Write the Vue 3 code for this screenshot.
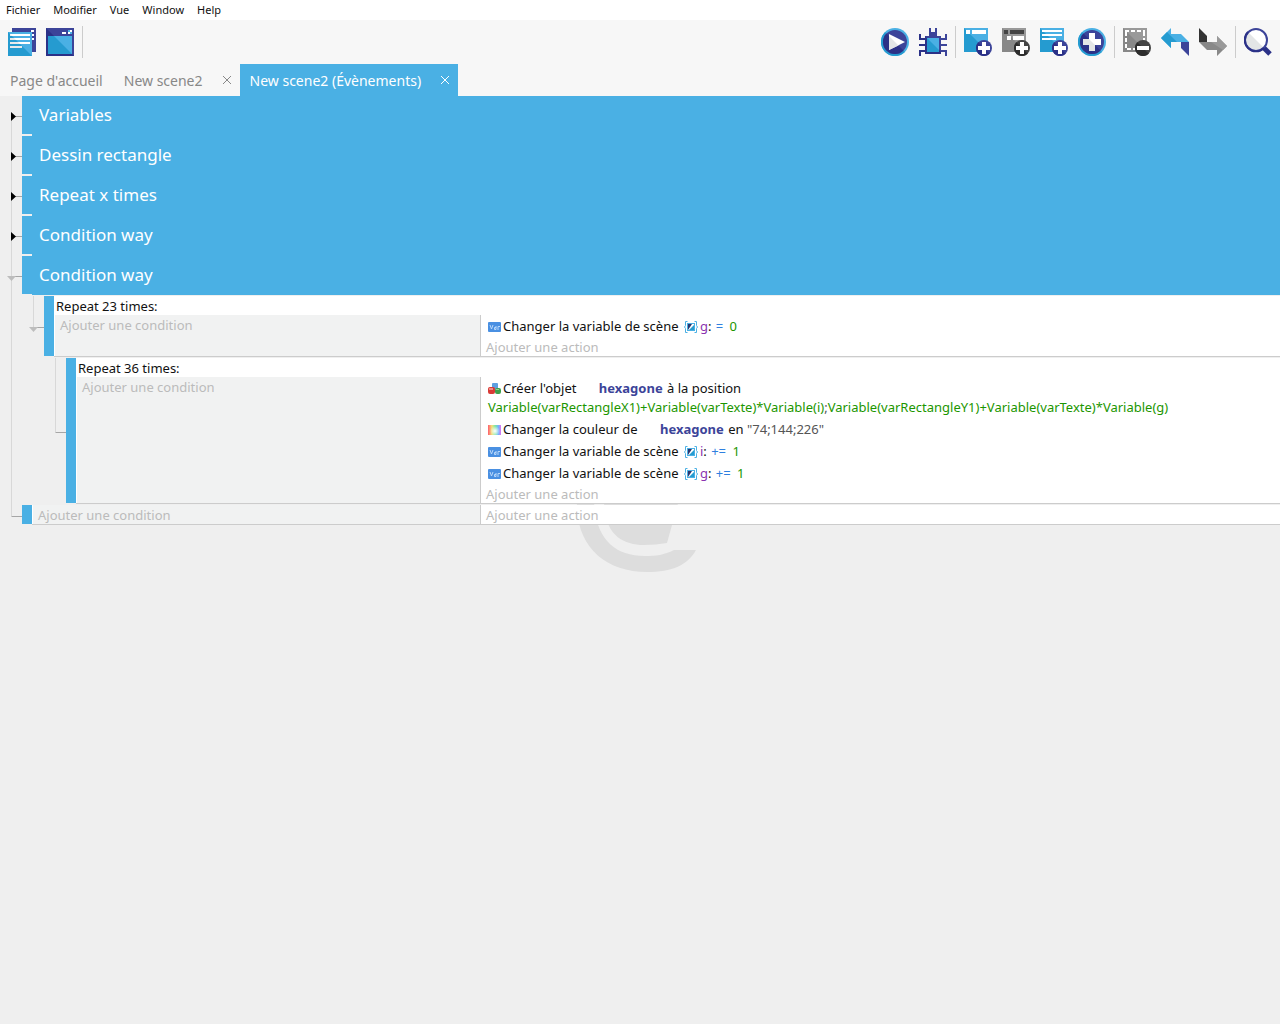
<script setup>
import { ref } from 'vue';

const menu = ['Fichier', 'Modifier', 'Vue', 'Window', 'Help'];

const tabs = ref([
    { name: "Page d'accueil", closable: false },
    { name: 'New scene2', closable: true },
    { name: 'New scene2 (Évènements)', closable: true },
]);
const activeTab = ref(2);

const closeTab = (index) => {
    tabs.value.splice(index, 1);
    activeTab.value = Math.min(activeTab.value, tabs.value.length - 1);
};

const setVariable = (name, sign, value) => ({
    icon: 'var',
    parts: [
        { text: 'Changer la variable de scène ' },
        { type: 'sceneIcon' },
        { type: 'variable', text: name },
        { text: ': ' },
        { type: 'operator', text: sign },
        { text: ' ' },
        { type: 'number', text: value },
    ],
});

// depth - уровень вложенности, last - последнее событие на своём уровне
const events = ref([
    { type: 'group', title: 'Variables', depth: 0, arrow: 'closed' },
    { type: 'group', title: 'Dessin rectangle', depth: 0, arrow: 'closed' },
    { type: 'group', title: 'Repeat x times', depth: 0, arrow: 'closed' },
    { type: 'group', title: 'Condition way', depth: 0, arrow: 'closed' },
    { type: 'group', title: 'Condition way', depth: 0, arrow: 'open' },
    {
        type: 'repeat', title: 'Repeat 23 times:', depth: 1, arrow: 'open', last: true, lines: [true],
        actions: [setVariable('g', '=', '0')],
    },
    {
        type: 'repeat', title: 'Repeat 36 times:', depth: 2, last: true, lines: [true, false],
        actions: [
            {
                icon: 'create',
                parts: [
                    { text: "Créer l'objet " },
                    { type: 'object', text: 'hexagone' },
                    { text: ' à la position ' },
                    { type: 'number', text: 'Variable(varRectangleX1)+Variable(varTexte)*Variable(i)' },
                    { type: 'comma', text: ';' },
                    { type: 'number', text: 'Variable(varRectangleY1)+Variable(varTexte)*Variable(g)' },
                ],
            },
            {
                icon: 'color',
                parts: [
                    { text: 'Changer la couleur de ' },
                    { type: 'object', text: 'hexagone' },
                    { text: ' en ' },
                    { type: 'string', text: '"74;144;226"' },
                ],
            },
            setVariable('i', '+=', '1'),
            setVariable('g', '+=', '1'),
        ],
    },
    { type: 'standard', depth: 0, last: true, actions: [] },
]);
</script>


<template>
    <div class="app">
        <nav class="menu">
            <button v-for="item in menu" :key="item" class="menu__item">{{ item }}</button>
        </nav>

        <div class="toolbar">
            <button class="tool" aria-label="Gestionnaire de projet">
                <svg viewBox="0 0 28 28">
                    <path fill="#3c4499" d="M4 0h24v24H4z" />
                    <path fill="#fff" d="M23 2h3v2h-3zM23 6h3v2h-3zM23 10h3v2h-3z" />
                    <path fill="#259bd0" d="M0 4h24v24H0z" />
                    <path fill="#4ab0e4" d="M0 4h24v24z" />
                    <path fill="#e8eaeb" d="M2 6h20v2H2zM2 10h20v2H2zM2 14h20v2H2zM2 18h12v2H2z" />
                    <path fill="#fff" d="M2 6h20v2H4zM6 10h16v2H8zM10 14h12v2H12z" />
                </svg>
            </button>
            <button class="tool" aria-label="Aperçu">
                <svg viewBox="0 0 28 28">
                    <path fill="#2b3187" d="M0 0h28v28H0z" />
                    <path fill="#3c4499" d="M0 0h28v28z" />
                    <path fill="#259bd0" d="M2 8h24v18H2z" />
                    <path fill="#4ab0e4" d="M8 8h18v18z" />
                    <path fill="#fff" d="M16 4h4v2h-4zM22 2h4v4h-4z" />
                    <path fill="#4ab0e4" d="M22 2h2v2h-2zM24 4h2v2h-2z" />
                </svg>
            </button>
            <span class="separator"></span>
            <span class="spacer"></span>

            <button class="tool" aria-label="Lancer">
                <svg viewBox="0 0 28 28">
                    <circle cx="14" cy="14" r="14" fill="#4ab0e4" />
                    <path fill="#259bd0" d="M4 4a14 14 0 0 0 20 20z" />
                    <circle cx="14" cy="14" r="12" fill="#3c4499" />
                    <path fill="#2b3187" d="M5.500 5.500a12 12 0 0 0 17 17z" />
                    <path fill="#fff" d="M8 6l16 8-16 8z" />
                    <path fill="#e3e5e6" d="M8 8l9.500 9.500L8 22z" />
                </svg>
            </button>
            <button class="tool" aria-label="Débogueur">
                <svg viewBox="0 0 28 28">
                    <path fill="#3c4499" d="M10 0h2v4h4V0h2v8h4v18H6V8h4z" />
                    <path fill="#3c4499" d="M28 6v6h-6v-2h4V6zM28 16v2h-6v-2zM28 28h-2v-4h-4v-2h6z" />
                    <path fill="#2b3187" d="M0 6v6h6v-2H2V6zM0 16v2h6v-2zM0 28h2v-4h4v-2H0zM6 8l16 16v2H6z" />
                    <path fill="#259bd0" d="M8 10h12v14H8z" />
                    <path fill="#4ab0e4" d="M8 10h12v12z" />
                </svg>
            </button>
            <span class="separator"></span>

            <button class="tool" aria-label="Ajouter un évènement">
                <svg viewBox="0 0 28 28">
                    <path fill="#259bd0" d="M0 0h24v24H0z" />
                    <path fill="#4ab0e4" d="M0 0h24v24z" />
                    <path fill="#fff" d="M2 2h4v4H2zM8 2h14v4H8z" />
                    <circle cx="20" cy="20" r="8" fill="#3c4499" />
                    <path fill="#2b3187" d="M14.300 14.300a8 8 0 0 0 11.400 11.400z" />
                    <path fill="#fff" d="M18 14h4v4h4v4h-4v4h-4v-4h-4v-4h4z" />
                </svg>
            </button>
            <button class="tool" aria-label="Ajouter un sous-évènement">
                <svg viewBox="0 0 28 28">
                    <path fill="#888" d="M0 0h24v24H0z" />
                    <path fill="#999" d="M0 0h24v24z" />
                    <path fill="#444" d="M2 2h4v4H2zM8 2h14v4H8z" />
                    <path fill="#fff" d="M5 8h4v4H5zM11 8h11v4H11z" />
                    <circle cx="20" cy="20" r="8" fill="#444" />
                    <path fill="#2d2d2d" d="M14.300 14.300a8 8 0 0 0 11.400 11.400z" />
                    <path fill="#fff" d="M18 14h4v4h4v4h-4v4h-4v-4h-4v-4h4z" />
                </svg>
            </button>
            <button class="tool" aria-label="Ajouter un commentaire">
                <svg viewBox="0 0 28 28">
                    <path fill="#259bd0" d="M0 0h24v24H0z" />
                    <path fill="#4ab0e4" d="M0 0h24v24z" />
                    <path fill="#fff" d="M2 2h20v2H2zM2 6h20v2H2zM2 10h14v2H2z" />
                    <circle cx="20" cy="20" r="8" fill="#3c4499" />
                    <path fill="#2b3187" d="M14.300 14.300a8 8 0 0 0 11.400 11.400z" />
                    <path fill="#fff" d="M18 14h4v4h4v4h-4v4h-4v-4h-4v-4h4z" />
                </svg>
            </button>
            <button class="tool" aria-label="Ajouter">
                <svg viewBox="0 0 28 28">
                    <circle cx="14" cy="14" r="14" fill="#4ab0e4" />
                    <path fill="#259bd0" d="M4 4a14 14 0 0 0 20 20z" />
                    <circle cx="14" cy="14" r="12" fill="#3c4499" />
                    <path fill="#2b3187" d="M5.500 5.500a12 12 0 0 0 17 17z" />
                    <path fill="#fff" d="M11 5h6v6h6v6h-6v6h-6v-6H5v-6h6z" />
                    <path fill="#e3e5e6" d="M5 11h6l6 6v6h-6v-6H5z" />
                </svg>
            </button>
            <span class="separator"></span>

            <button class="tool" aria-label="Supprimer">
                <svg viewBox="0 0 28 28">
                    <path fill="#888" d="M0 0h24v24H0z" />
                    <path fill="#999" d="M0 0h24v24z" />
                    <path fill="none" stroke="#fff" stroke-width="2" stroke-dasharray="4 2" d="M2 3h20M21 4v8M3 4v18M4 21h8" />
                    <circle cx="20" cy="20" r="8" fill="#444" />
                    <path fill="#2d2d2d" d="M14.300 14.300a8 8 0 0 0 11.400 11.400z" />
                    <path fill="#fff" d="M14 18h12v4H14z" />
                </svg>
            </button>
            <button class="tool" aria-label="Annuler">
                <svg viewBox="0 0 28 28">
                    <path fill="#4ab0e4" d="M0 10L10 0v6h10l8 8H10v6z" />
                    <path fill="#259bd0" d="M0 10l6-6 10 10h-6v6z" />
                    <path fill="#3c4499" d="M20 14h8v14l-8-8z" />
                </svg>
            </button>
            <button class="tool" aria-label="Refaire">
                <svg viewBox="0 0 28 28">
                    <path fill="#888" d="M28 18L18 28v-6H8l-8-8h18V8z" />
                    <path fill="#999" d="M28 18L18 8v6h-6l12 8z" />
                    <path fill="#333" d="M0 0l8 8v6H0z" />
                </svg>
            </button>
            <span class="separator"></span>

            <button class="tool" aria-label="Rechercher">
                <svg viewBox="0 0 28 28">
                    <path stroke="#2b3187" stroke-width="5" d="M18 18l8 8" />
                    <circle cx="12" cy="12" r="11" fill="#fff" />
                    <path fill="#e3e5e6" d="M4 4a11 11 0 0 0 16 16z" />
                    <circle cx="12" cy="12" r="11" fill="none" stroke="#3c4499" stroke-width="2" />
                    <path fill="none" stroke="#2b3187" stroke-width="2" d="M4 4a11 11 0 0 0 16 16" />
                </svg>
            </button>
        </div>

        <div class="tabs">
            <div v-for="(tab, index) in tabs" :key="tab.name" class="tab" :class="{ active: index === activeTab }">
                <button class="tab__name" @click="activeTab = index">{{ tab.name }}</button>
                <button v-if="tab.closable" class="tab__close" aria-label="Fermer" @click="closeTab(index)">
                    <svg viewBox="0 0 10 10"><path d="M1 1l8 8M9 1L1 9" /></svg>
                </button>
            </div>
        </div>

        <main class="sheet">
            <!-- Логотип на фоне -->
            <svg class="watermark" viewBox="0 0 160 100">
                <path d="M17 10C15 56 45 82 87 82C112 82 128 75 136 60H114C104 65 96 66 85 66C54 66 35 48 34 10z" />
                <path d="M44 10C44 44 62 55 84 55Q96 55 107 53L119 10H62C62 31 74 39 86 39H94L101 10z" />
            </svg>

            <div
                v-for="(event, index) in events"
                :key="index"
                class="event"
                :class="[event.type, event.arrow]"
                :style="{ '--indent': (event.depth + 1) * 22 + 'px' }"
            >
                <div v-for="(line, level) in event.lines" :key="level" class="branch" :class="{ branch_line: line }"></div>
                <div class="node" :class="{ node_first: index === 0, node_last: event.last }">
                    <div class="node__top"></div>
                    <div class="node__bottom"></div>
                    <svg v-if="event.arrow === 'closed'" class="arrow" viewBox="0 0 9 9"><path fill="#000" d="M4 0l5 4.500L4 9z" /></svg>
                    <svg v-if="event.arrow === 'open'" class="arrow" viewBox="0 0 9 9"><path fill="#bdbdbd" d="M0 4h9L4.500 9z" /></svg>
                </div>
                <div class="handle"></div>

                <h2 v-if="event.type === 'group'" class="group__title">{{ event.title }}</h2>
                <div v-else class="content">
                    <div v-if="event.title" class="repeat__title">{{ event.title }}</div>
                    <div class="columns">
                        <div class="conditions">
                            <button class="add">Ajouter une condition</button>
                        </div>
                        <div class="actions">
                            <div v-for="(action, i) in event.actions" :key="i" class="action">
                                <svg v-if="action.icon === 'var'" class="icon" viewBox="0 0 15 14">
                                    <rect y="2" width="13" height="10" rx="1" fill="#4a90e2" />
                                    <path fill="none" stroke="#b9d8fa" d="M2 5l1.500 4L5 5M8 6v3.500H6.500V7.500H8M10 10V6.500h2" />
                                </svg>
                                <svg v-if="action.icon === 'create'" class="icon" viewBox="0 0 15 14">
                                    <rect x="4" y="1" width="6" height="6" rx="1" fill="#5d9fe0" />
                                    <rect y="5" width="7" height="7" rx="2" fill="#d93a36" />
                                    <rect x="7" y="6" width="6" height="6" rx="2" fill="#3f9f4c" />
                                    <path fill="#f08b84" d="M1 6h4v2H1z" />
                                    <path fill="#8fd08f" d="M8 7h3v1H8z" />
                                </svg>
                                <svg v-if="action.icon === 'color'" class="icon" viewBox="0 0 15 14">
                                    <defs>
                                        <linearGradient id="hue">
                                            <stop offset="0" stop-color="#ff5b6e" />
                                            <stop offset=".3" stop-color="#f3e27a" />
                                            <stop offset=".55" stop-color="#7be8a0" />
                                            <stop offset=".8" stop-color="#6fb4ff" />
                                            <stop offset="1" stop-color="#e070f0" />
                                        </linearGradient>
                                        <radialGradient id="glow">
                                            <stop offset="0" stop-color="#fff" />
                                            <stop offset="1" stop-color="#fff" stop-opacity="0" />
                                        </radialGradient>
                                    </defs>
                                    <path fill="url(#hue)" d="M0 2h13v10H0z" />
                                    <circle cx="7" cy="8" r="5" fill="url(#glow)" />
                                </svg>
                                <template v-for="(part, k) in action.parts" :key="k">
                                    <svg v-if="part.type === 'sceneIcon'" class="icon icon_scene" viewBox="0 0 16 14">
                                        <path fill="none" stroke="#4ab0e4" d="M3.500 1.500h-2v4L.5 7l1 1.500v4h2M10.500 1.500h2v4l1 1.500-1 1.500v4h-2" />
                                        <path fill="#4ab0e4" d="M3 3h8v8H3z" />
                                        <path fill="#fff" d="M4 4h6v6H4z" />
                                        <path fill="#29366f" d="M4 4h4L4 10z" />
                                        <path fill="#259bd0" d="M10 5v5H5z" />
                                    </svg>
                                    <span v-else :class="part.type">{{ part.text }}</span>
                                </template>
                            </div>
                            <button class="add">Ajouter une action</button>
                        </div>
                    </div>
                </div>
            </div>
        </main>
    </div>
</template>

<style>
    body{
        margin: 0;
        background-color: #efefef;
    }
</style>

<style scoped>
    .app{
        min-height: 100vh;
        font-family: "Noto Sans", "Open Sans", sans-serif;
        font-size: 13px;
        color: #111;
    }
    button{
        padding: 0;
        border: none;
        background: none;
        font-family: inherit;
        font-size: inherit;
        color: inherit;
        cursor: pointer;
    }
    svg{
        display: block;
    }
    .menu{
        display: flex;
        gap: 13px;
        height: 20px;
        padding: 0 6px;
        background-color: #fff;
        font-size: 11px;
    }
    .menu__item{
        height: 18px;
    }
    .toolbar{
        display: flex;
        align-items: center;
        height: 44px;
        padding: 0 3px;
        background-color: #f7f7f7;
    }
    .tool{
        width: 28px;
        height: 28px;
        margin: 0 5px;
    }
    .separator{
        width: 1px;
        height: 32px;
        margin: 0 3px;
        background-color: #ccc;
    }
    .spacer{
        flex-grow: 1;
    }
    .tabs{
        display: flex;
        height: 32px;
        background-color: #f7f7f7;
        font-size: 14px;
        color: #888;
    }
    .tab{
        display: flex;
        align-items: center;
    }
    .tab.active{
        background-color: #4ab0e4;
        color: #fff;
    }
    .tab__name{
        height: 32px;
        padding: 0 11px 0 10px;
    }
    .tab__close{
        padding: 0 8px;
    }
    .tab__close svg{
        width: 10px;
        height: 10px;
        fill: none;
        stroke: currentColor;
    }
    .sheet{
        position: relative;
        z-index: 0;
    }
    .watermark{
        position: absolute;
        top: 394px;
        left: calc(50% - 80px);
        width: 160px;
        height: 100px;
        fill: #ddd;
        z-index: -1;
    }
    .event{
        display: flex;
    }
    .branch{
        width: 11px;
        margin-left: 11px;
        box-sizing: border-box;
    }
    .branch_line{
        border-left: 1px solid #d8d8d8;
    }
    .node{
        position: relative;
        display: flex;
        flex-direction: column;
        width: 11px;
        margin-left: 11px;
    }
    .node__top, .node__bottom{
        flex: 1;
        border-left: 1px solid #d8d8d8;
    }
    .node__bottom{
        border-top: 1px solid #a6a6a6;
        margin-bottom: -1px;
    }
    .node_first .node__top, .node_last .node__bottom{
        border-left-color: transparent;
    }
    .arrow{
        position: absolute;
        top: calc(50% - 4px);
        left: -4px;
        width: 9px;
        height: 9px;
    }
    .handle{
        width: 10px;
        margin-bottom: 2px;
        background-color: #4ab0e4;
    }
    .group__title{
        flex: 1;
        margin: 0;
        padding: 0 0 2px 7px;
        line-height: 38px;
        background-color: #4ab0e4;
        font-size: 17px;
        font-weight: 400;
        color: #fff;
    }
    .group.open .group__title{
        padding-bottom: 1px;
        margin-bottom: 1px;
    }
    .content{
        flex: 1;
        min-width: 0;
        margin-bottom: 1px;
        border-bottom: 1px solid #ccc;
        background-color: #fff;
        line-height: 19px;
    }
    .repeat__title{
        height: 19px;
        padding-left: 2px;
        line-height: 21px;
    }
    .columns{
        display: flex;
    }
    .conditions{
        box-sizing: border-box;
        width: calc(37.5vw - var(--indent) - 10px);
        margin-left: 1px;
        padding-left: 5px;
        border-right: 1px solid #ccc;
        background-color: #f1f2f2;
    }
    .actions{
        flex: 1;
        min-width: 0;
        padding-left: 5px;
    }
    .add{
        display: block;
        height: 19px;
        padding-top: 2px;
        line-height: 17px;
        color: #bbb;
    }
    .action{
        padding: 2px 0 1px 2px;
    }
    .icon{
        display: inline-block;
        width: 15px;
        height: 14px;
        vertical-align: -3px;
    }
    .icon_scene{
        width: 16px;
        margin-left: 2px;
    }
    .object{
        margin: 0 1px 0 19px;
        font-weight: 700;
        color: #3c4499;
    }
    .number{
        color: #1c9600;
    }
    .operator{
        margin: 0 3px 0 1px;
        color: #2f80e0;
    }
    .variable{
        color: #8a33b0;
    }
    .string, .comma{
        color: #555;
    }
</style>
